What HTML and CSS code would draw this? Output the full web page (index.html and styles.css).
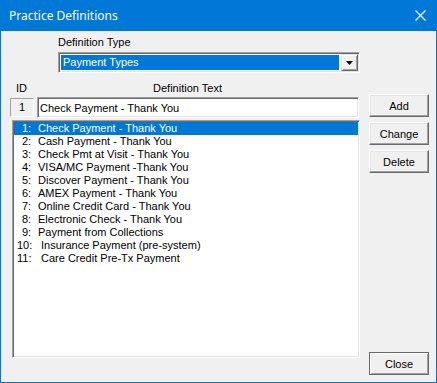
FILE: index.html
```html
<!DOCTYPE html>
<html lang="en">
<head>
    <meta charset="UTF-8">
    <title>Practice Definitions</title>
    <link rel="stylesheet" href="styles.css">
</head>
<body>
    <div class="window">
        <!-- Title Bar -->
        <div class="titlebar">
            <span class="title">Practice Definitions</span>
            <svg class="close-x" width="11" height="11" viewBox="0 0 11 11">
                <path d="M0.5 0.5 L10.5 10.5 M10.5 0.5 L0.5 10.5" stroke="#fff" stroke-width="1.1" fill="none"/>
            </svg>
        </div>

        <div class="content">
            <div class="main">
                <div class="type-label">Definition Type</div>
                <div class="combo">
                    <div class="combo-value">Payment Types</div>
                    <div class="combo-btn">
                        <svg width="7" height="4" viewBox="0 0 7 4"><path d="M0 0 H7 L3.5 4 Z" fill="#000"/></svg>
                    </div>
                </div>

                <div class="heads">
                    <span class="head-id">ID</span>
                    <span class="head-text">Definition Text</span>
                </div>

                <div class="entry">
                    <div class="id-box">1</div>
                    <input type="text" class="text-input" value="Check Payment - Thank You">
                </div>

                <!-- Definitions List -->
                <ul class="list">
                    <li class="selected"><span class="num">1:</span>Check Payment - Thank You</li>
                    <li><span class="num">2:</span>Cash Payment - Thank You</li>
                    <li><span class="num">3:</span>Check Pmt at Visit - Thank You</li>
                    <li><span class="num">4:</span>VISA/MC Payment -Thank You</li>
                    <li><span class="num">5:</span>Discover Payment - Thank You</li>
                    <li><span class="num">6:</span>AMEX Payment - Thank You</li>
                    <li><span class="num">7:</span>Online Credit Card - Thank You</li>
                    <li><span class="num">8:</span>Electronic Check - Thank You</li>
                    <li><span class="num">9:</span>Payment from Collections</li>
                    <li><span class="num wide">10:</span>Insurance Payment (pre-system)</li>
                    <li><span class="num wide">11:</span>Care Credit Pre-Tx Payment</li>
                </ul>
            </div>

            <div class="buttons">
                <button class="btn">Add</button>
                <button class="btn">Change</button>
                <button class="btn">Delete</button>
                <button class="btn close-btn">Close</button>
            </div>
        </div>
    </div>
</body>
</html>
```

FILE: styles.css
```css
/* Dialog window */
body {
    margin: 0;
    background: #f0f0f0;
    font-family: "Liberation Sans", Arial, sans-serif;
    font-size: 11px;
    color: #000;
}

.window {
    width: 437px;
    height: 383px;
    box-sizing: border-box;
    border: 1px solid #0078d7;
    border-top: none;
    display: flex;
    flex-direction: column;
    background: #f0f0f0;
}

.titlebar {
    height: 31px;
    flex: none;
    background: #0078d7;
    color: #fff;
    display: flex;
    align-items: center;
    padding: 0 10px 0 8px;
}

.title {
    font-family: "Noto Sans", "Open Sans", sans-serif;
    font-size: 12px;
    flex: 1;
    margin-top: -1px;
}

.close-x {
    display: block;
    margin-top: -1px;
}

/* Body of the dialog */
.content {
    flex: 1;
    display: flex;
    padding-left: 9px;
}

.main {
    width: 350px;
    display: flex;
    flex-direction: column;
}

.type-label {
    margin: 5px 0 0 48px;
    line-height: 13px;
}

/* Combo box */
.combo {
    margin: 3px 0 0 48px;
    width: 302px;
    height: 21px;
    box-sizing: border-box;
    display: flex;
    background: #fff;
    padding: 1px;
    border: 1px solid;
    border-color: #a0a0a0 #fff #fff #a0a0a0;
    box-shadow: inset 1px 1px #696969, inset -1px -1px #e3e3e3;
}

.combo-value {
    flex: 1;
    margin: 1px 2px 1px 1px;
    background: #0078d7;
    color: #fff;
    line-height: 15px;
    padding-left: 2px;
}

.combo-btn {
    width: 17px;
    box-sizing: border-box;
    background: #f0f0f0;
    border: 1px solid;
    border-color: #e3e3e3 #696969 #696969 #e3e3e3;
    box-shadow: inset 1px 1px #fff, inset -1px -1px #a0a0a0;
    display: flex;
    align-items: center;
    justify-content: center;
}

.combo-btn svg {
    display: block;
    margin-top: 1px;
}

/* Column headers */
.heads {
    margin-top: 9px;
    height: 13px;
    line-height: 13px;
}

.head-id {
    margin-left: 6px;
}

.head-text {
    margin-left: 123px;
}

/* ID + text entry row */
.entry {
    margin-top: 2px;
    display: flex;
    align-items: flex-start;
}

.id-box {
    width: 24px;
    height: 19px;
    margin-top: 1px;
    box-sizing: border-box;
    border: 1px solid;
    border-color: #a0a0a0 #fff #fff #a0a0a0;
    background: #f0f0f0;
    text-align: center;
    line-height: 17px;
}

.text-input {
    margin: 0 0 0 3px;
    width: 322px;
    height: 21px;
    box-sizing: border-box;
    padding: 0 2px;
    font-family: "Liberation Sans", Arial, sans-serif;
    font-size: 11px;
    color: #000;
    background: #fff;
    border: 1px solid;
    border-color: #a0a0a0 #fff #fff #a0a0a0;
    box-shadow: inset 1px 1px #696969, inset -1px -1px #e3e3e3;
    outline: none;
}

/* List box */
.list {
    list-style-type: none;
    margin: 2px 0 0 2px;
    padding: 1px 0;
    width: 348px;
    height: 238px;
    box-sizing: border-box;
    background: #fff;
    border: 1px solid;
    border-color: #a0a0a0 #fff #fff #a0a0a0;
    box-shadow: inset 1px 1px #696969, inset -1px -1px #e3e3e3;
}

.list li {
    height: 13px;
    line-height: 13px;
    margin: 0 1px;
    white-space: nowrap;
}

.list li.selected {
    background: #0078d7;
    color: #fff;
}

.num {
    display: inline-block;
    width: 16px;
    padding-left: 8px;
}

.num.wide {
    width: 24px;
    padding-left: 3px;
}

/* Buttons */
.buttons {
    margin-left: 9px;
    width: 60px;
    display: flex;
    flex-direction: column;
    padding-top: 63px;
    padding-bottom: 7px;
}

.btn {
    height: 23px;
    margin-bottom: 5px;
    font-family: "Liberation Sans", Arial, sans-serif;
    font-size: 11px;
    color: #000;
    background: #f0f0f0;
    border: 1px solid;
    border-color: #fff #696969 #696969 #fff;
    box-shadow: inset -1px -1px #a0a0a0, inset 1px 1px #e3e3e3;
    padding: 0;
}

.close-btn {
    margin-top: auto;
    margin-bottom: 0;
    border-color: #696969;
    box-shadow: inset 1px 1px #fff, inset -1px -1px #a0a0a0;
}
```
